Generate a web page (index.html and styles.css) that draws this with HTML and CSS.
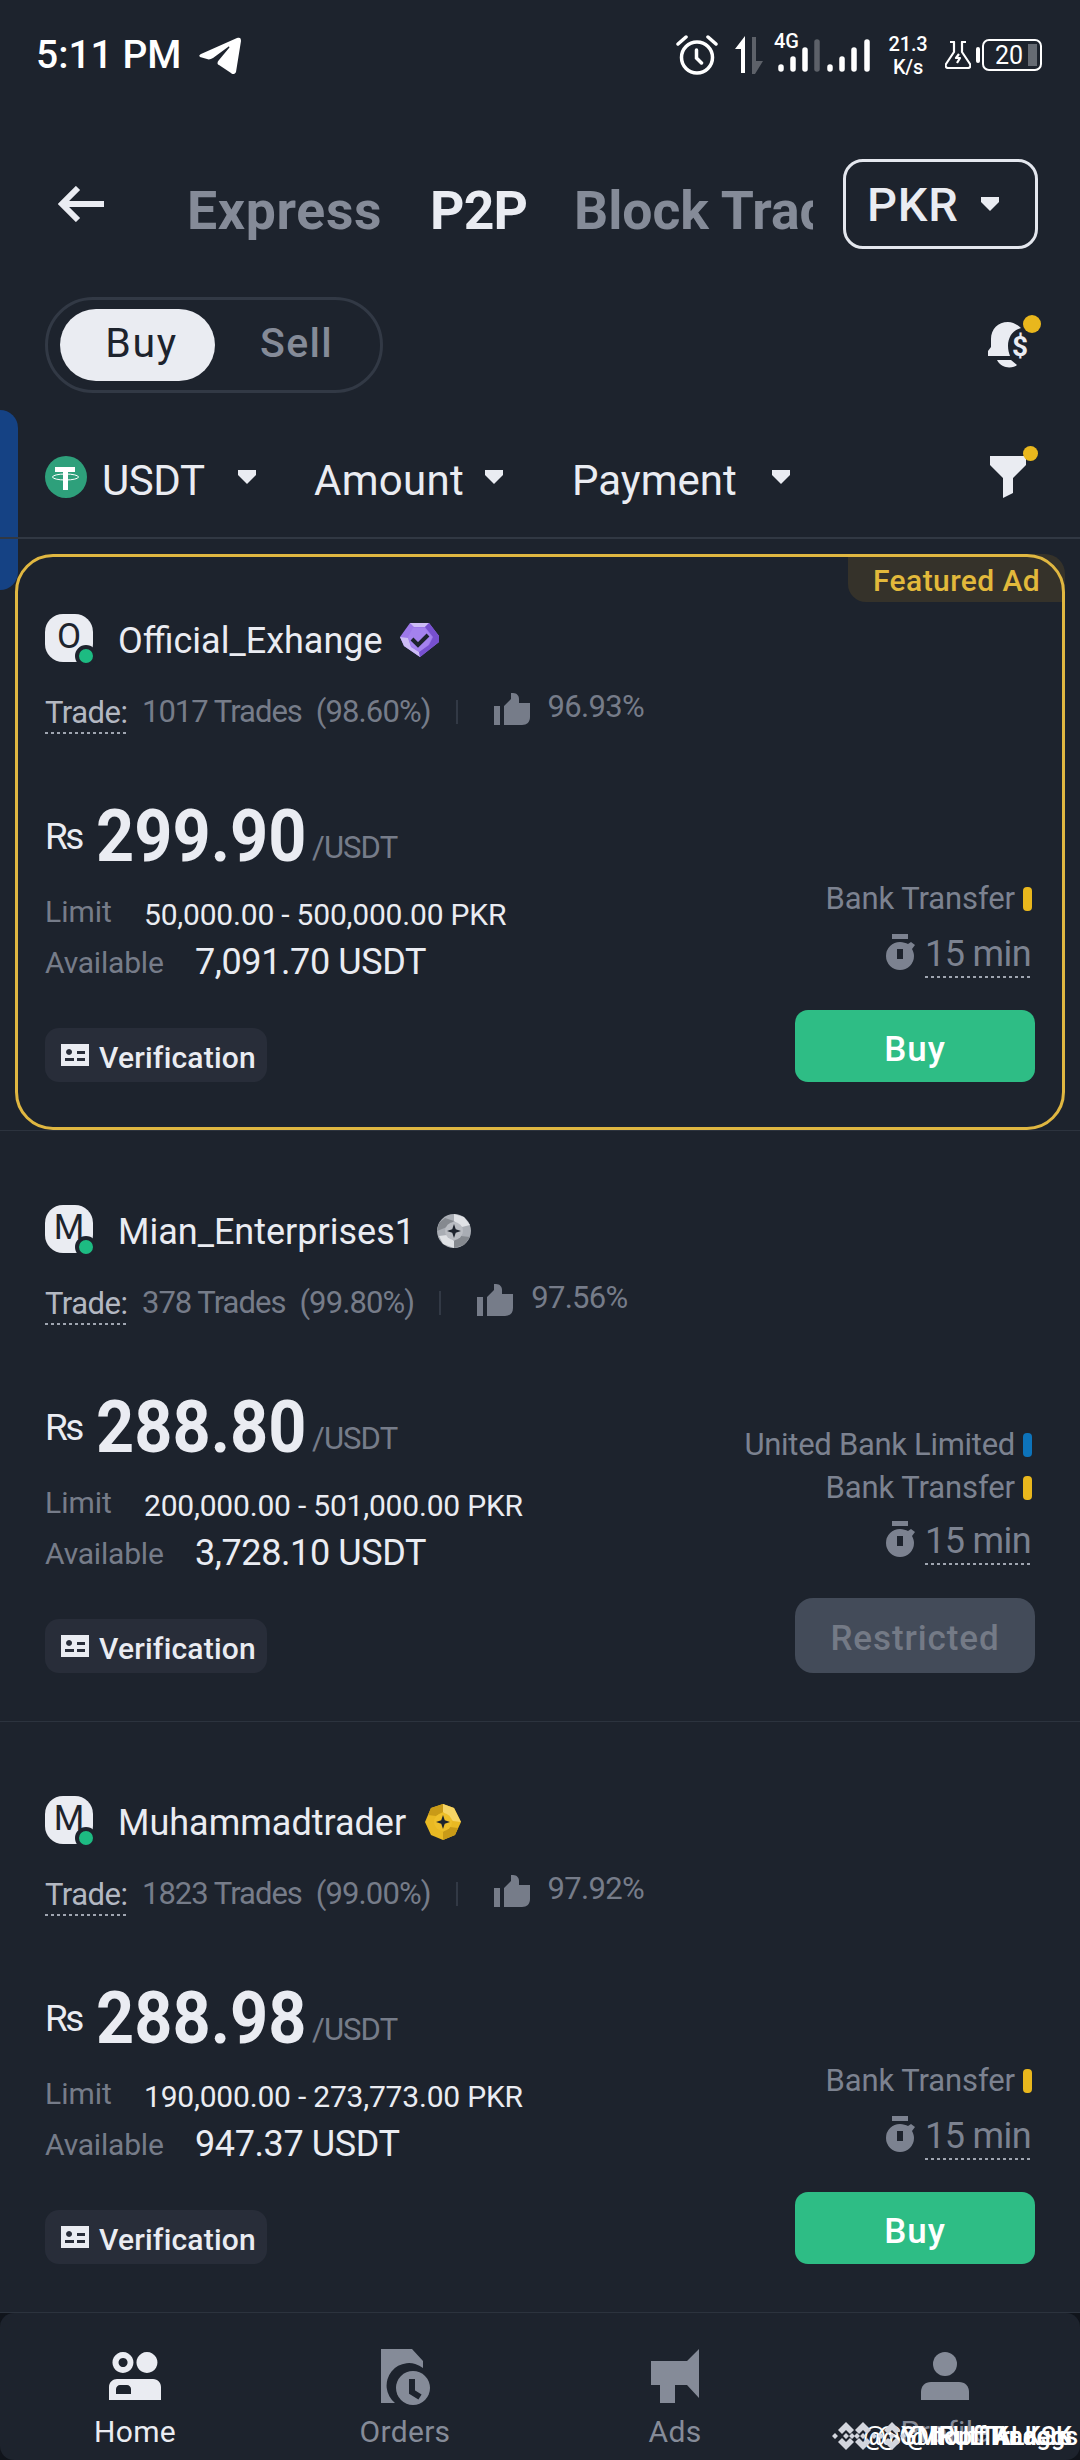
FILE: index.html
```html
<!DOCTYPE html>
<html lang="en">
<head>
    <meta charset="UTF-8">
    <meta name="viewport" content="width=device-width, initial-scale=1.0">
    <title>P2P</title>
    <link rel="stylesheet" href="styles.css">
</head>
<body>
    <!-- Shared icons -->
    <svg class="sprite">
        <symbol id="caret" viewBox="0 0 18 14"><path d="M0 0h18v5l-9 9-9-9z"/></symbol>
        <symbol id="thumb" viewBox="0 0 36 32"><path d="M0 13h6v19H0zM10 32V13l7-7V0h2c4 0 6 3 6 6v4h11v14c0 5-3 8-8 8z"/></symbol>
        <symbol id="timer" viewBox="0 0 29 36"><path fill-rule="evenodd" d="M6 0h16v5H6zM14 8c3 0 6 1 8 2l3-2 4 3-3 4c1 2 2 4 2 7a14 14 0 1 1-14-14zM11 15v10h6V15z"/></symbol>
        <symbol id="idcard" viewBox="0 0 28 22"><path fill-rule="evenodd" d="M0 0h28v22H0zM8 5a3 3 0 1 0 .1 0zM4 14v3h9v-3zM16 7v3h8V7zM16 14v3h8v-3z"/></symbol>
        <symbol id="star" viewBox="0 0 12 12"><path d="M6 0l1.500 4.500L12 6 7.500 7.500 6 12 4.500 7.500 0 6l4.500-1.500z"/></symbol>
        <symbol id="mark" viewBox="0 0 28 28"><path d="M14 0l8 8-4 4-4-4-4 4-4-4zM14 28l8-8-4-4-4 4-4-4-4 4zM3 11l3 3-3 3-3-3zM25 11l3 3-3 3-3-3zM14 11l3 3-3 3-3-3z"/></symbol>
    </svg>

    <div class="phone">
        <header class="header">
            <div class="status">
                <span class="clock">5:11 PM</span>
                <svg class="telegram" width="42" height="37" viewBox="0 0 42 37"><path fill="#fff" d="M2 17L38 1c3-1 4 0 4 3l-5 31c-1 2-3 3-5 1L20 28c-2-1-2-3 0-5l10-12c1-1 0-2-1-1L14 21c-2 1-4 2-6 1l-7-2c-1-1-1-2 1-3z"/></svg>
                <div class="status-right">
                    <svg class="alarm" width="42" height="40" viewBox="0 0 42 40" fill="none" stroke="#fff" stroke-width="3.500" stroke-linecap="round"><circle cx="21" cy="22.500" r="15.500"/><path d="M2 9l8-7M40 9l-8-7M20.500 15v8l5 5"/></svg>
                    <svg class="updown" width="28" height="38" viewBox="0 0 28 38"><path fill="#fff" d="M10 0v37H6V13H0z"/><path fill="#5d6169" d="M17 1h4v24h7L20 38h-3z"/></svg>
                    <div class="signal">
                        <span class="net">4G</span>
                        <svg width="96" height="33" viewBox="0 0 96 33" fill="none" stroke="#fff" stroke-width="5.500" stroke-linecap="round"><path d="M4 28v2M16 20v10M28 11v19M53 28v2M65 20v10M77 11v19M90 3v27"/><path stroke="#5d6169" d="M40 3v27"/></svg>
                    </div>
                    <div class="speed"><span>21.3</span><span>K/s</span></div>
                    <svg class="flask" width="26" height="28" viewBox="0 0 26 28" fill="none" stroke="#fff" stroke-width="2.200" stroke-linejoin="round"><path d="M5 1h4v10L1 23c-1 2 0 4 2 4h20c2 0 3-2 2-4l-8-12V1h4"/><path d="M14 13l-3 4h4l-3 5"/></svg>
                    <div class="battery"><span>20</span><i></i></div>
                </div>
            </div>

            <div class="topbar">
                <svg class="back" width="46" height="36" viewBox="0 0 46 36" fill="none" stroke="#eaecf2" stroke-width="6"><path d="M46 18H5M20 2L4 18l16 16"/></svg>
                <nav class="titles">
                    <span class="title t1">Express</span>
                    <span class="title t2 active">P2P</span>
                    <span class="title t3">Block Trade</span>
                </nav>
                <button class="currency"><span class="pkr">PKR</span><svg class="caret"><use href="#caret"/></svg></button>
            </div>

            <div class="side-row">
                <div class="toggle">
                    <span class="pill buy-pill">Buy</span>
                    <span class="pill">Sell</span>
                </div>
                <div class="bell">
                    <svg width="42" height="46" viewBox="0 0 42 46"><path fill="#eaecf2" d="M0 34v-5l3-4V17C3 7 10 0 20 0c5 0 10 3 13 6-8 2-13 9-13 18 0 4 1 7 2 10zM9 38h14l6 5c-3 3-15 5-20-5z"/></svg>
                    <span class="dollar">$</span>
                    <span class="alert"></span>
                </div>
            </div>

            <div class="filters">
                <svg class="usdt" width="42" height="42" viewBox="0 0 42 42"><circle cx="21" cy="21" r="21" fill="#2ea07b"/><path fill="#fff" d="M10 11h20v5h-7v18h-5V16h-8z"/><ellipse cx="20.500" cy="21" rx="13" ry="3" fill="none" stroke="#fff" stroke-width="1"/></svg>
                <span class="filter f1">USDT</span><svg class="caret"><use href="#caret"/></svg>
                <span class="filter f2">Amount</span><svg class="caret"><use href="#caret"/></svg>
                <span class="filter f3">Payment</span><svg class="caret"><use href="#caret"/></svg>
                <div class="funnel">
                    <svg width="36" height="42" viewBox="0 0 36 42"><path fill="#eaecf2" d="M0 0h36v9L23 22v15l-10 5V22L0 9z"/></svg>
                    <span class="alert small"></span>
                </div>
            </div>
        </header>

        <main class="offers">
            <section class="offer featured">
                <span class="tag">Featured Ad</span>
                <div class="trader">
                    <span class="avatar">O<i></i></span>
                    <span class="name">Official_Exhange</span>
                    <svg class="badge" width="39" height="34" viewBox="0 0 39 34"><path fill="#9d78ea" d="M10 0h19l10 13v6L20 34 4 23 0 14z"/><path fill="#cdbcf6" d="M10 0h19l-4 4H14zM0 14l8 1 3 9 8 5 1 5L4 23z"/><path fill="#7750cf" d="M29 0l10 13v6L20 34l-1-5 10-7 4-8-8-10z"/><path fill="#a482ee" d="M13 5h12l7 9-4 8-9 7-8-6-3-9z"/><path fill="none" stroke="#1d232d" stroke-width="4" d="M12 16l6 6 10-10"/></svg>
                </div>
                <div class="stats">
                    <span class="label">Trade:</span>
                    <span class="trades">1017 Trades</span>
                    <span class="rate">(98.60%)</span>
                    <i class="sep"></i>
                    <svg class="thumb"><use href="#thumb"/></svg>
                    <span class="like">96.93%</span>
                </div>
                <div class="body">
                    <div class="info">
                        <div class="price"><span class="rs">Rs</span><span class="amount">299.90</span><span class="unit">/USDT</span></div>
                        <div class="limit"><span class="key">Limit</span><span class="range">50,000.00 - 500,000.00 PKR</span></div>
                        <div class="avail"><span class="key">Available</span><span class="stock">7,091.70 USDT</span></div>
                        <div class="chip"><svg class="idcard"><use href="#idcard"/></svg><span>Verification</span></div>
                    </div>
                    <div class="side">
                        <div class="method"><span>Bank Transfer</span><i></i></div>
                        <div class="time"><svg class="timer"><use href="#timer"/></svg><span>15 min</span></div>
                        <button class="buy">Buy</button>
                    </div>
                </div>
            </section>

            <section class="offer restricted">
                <div class="trader">
                    <span class="avatar">M<i></i></span>
                    <span class="name">Mian_Enterprises1</span>
                    <svg class="badge silver" width="34" height="34" viewBox="0 0 34 34"><circle cx="17" cy="17" r="17" fill="#a9adb4"/><path fill="#dfe1e5" d="M17 0l10 3 6 8-8 2-8-6zM17 34L6 30 2 22l8-1 7 6z"/><path fill="#85898f" d="M17 34l10-3 6-8-9-1-7 5zM0 17l2-8 6-5 9 3-7 6z"/><circle cx="17" cy="17" r="9" fill="#b9bcc2"/><use href="#star" x="10" y="10" width="14" height="14" fill="#1d232d"/></svg>
                </div>
                <div class="stats">
                    <span class="label">Trade:</span>
                    <span class="trades">378 Trades</span>
                    <span class="rate">(99.80%)</span>
                    <i class="sep"></i>
                    <svg class="thumb"><use href="#thumb"/></svg>
                    <span class="like">97.56%</span>
                </div>
                <div class="body">
                    <div class="info">
                        <div class="price"><span class="rs">Rs</span><span class="amount">288.80</span><span class="unit">/USDT</span></div>
                        <div class="limit"><span class="key">Limit</span><span class="range">200,000.00 - 501,000.00 PKR</span></div>
                        <div class="avail"><span class="key">Available</span><span class="stock">3,728.10 USDT</span></div>
                        <div class="chip"><svg class="idcard"><use href="#idcard"/></svg><span>Verification</span></div>
                    </div>
                    <div class="side">
                        <div class="method blue"><span>United Bank Limited</span><i></i></div>
                        <div class="method"><span>Bank Transfer</span><i></i></div>
                        <div class="time"><svg class="timer"><use href="#timer"/></svg><span>15 min</span></div>
                        <button class="buy off">Restricted</button>
                    </div>
                </div>
            </section>

            <section class="offer">
                <div class="trader">
                    <span class="avatar">M<i></i></span>
                    <span class="name">Muhammadtrader</span>
                    <svg class="badge gold" width="36" height="36" viewBox="0 0 36 36"><path fill="#e9b923" d="M18 0l11 4 7 14-6 13-12 5-12-5L0 18 6 4z"/><path fill="#f6d465" d="M18 0l11 4 7 14-8-1-10-9z"/><path fill="#c99a17" d="M18 36l12-5 3-7-8-1-7 5zM18 0L6 4l-3 7 8 1 7-4z"/><circle cx="18" cy="18" r="9" fill="#eebf2a"/><use href="#star" x="11" y="11" width="14" height="14" fill="#1d232d"/></svg>
                </div>
                <div class="stats">
                    <span class="label">Trade:</span>
                    <span class="trades">1823 Trades</span>
                    <span class="rate">(99.00%)</span>
                    <i class="sep"></i>
                    <svg class="thumb"><use href="#thumb"/></svg>
                    <span class="like">97.92%</span>
                </div>
                <div class="body">
                    <div class="info">
                        <div class="price"><span class="rs">Rs</span><span class="amount">288.98</span><span class="unit">/USDT</span></div>
                        <div class="limit"><span class="key">Limit</span><span class="range">190,000.00 - 273,773.00 PKR</span></div>
                        <div class="avail"><span class="key">Available</span><span class="stock">947.37 USDT</span></div>
                        <div class="chip"><svg class="idcard"><use href="#idcard"/></svg><span>Verification</span></div>
                    </div>
                    <div class="side">
                        <div class="method"><span>Bank Transfer</span><i></i></div>
                        <div class="time"><svg class="timer"><use href="#timer"/></svg><span>15 min</span></div>
                        <button class="buy">Buy</button>
                    </div>
                </div>
            </section>
        </main>

        <div class="tabwrap">
            <nav class="tabs">
                <a class="tab on">
                    <svg width="52" height="58" viewBox="0 0 52 58"><path fill="currentColor" fill-rule="evenodd" d="M14 4a10.500 10.500 0 1 1-.1 0zM14 10a4.500 4.500 0 1 0 .1 0zM38 4a10.500 10.500 0 1 1-.1 0zM0 52V39c0-5 4-8 8-8h36c5 0 8 4 8 8v13zM7 46h15v-5c0-2-2-4-4-4h-7c-2 0-4 2-4 4z"/></svg>
                    <span>Home</span>
                </a>
                <a class="tab">
                    <svg width="50" height="58" viewBox="0 0 50 58"><path fill="currentColor" d="M1 1h31l11 12v7A21 21 0 0 0 15 55H1z"/><circle cx="33" cy="40" r="17" fill="currentColor"/><path fill="none" stroke="#1d232d" stroke-width="6" d="M32 31v13l8 5"/></svg>
                    <span>Orders</span>
                </a>
                <a class="tab">
                    <svg width="48" height="58" viewBox="0 0 48 58"><path fill="currentColor" d="M0 13h36L48 1v49L36 37H24v18H9V37H0z"/></svg>
                    <span>Ads</span>
                </a>
                <a class="tab">
                    <svg width="48" height="58" viewBox="0 0 48 58"><circle cx="24" cy="16" r="12" fill="currentColor"/><path fill="currentColor" d="M0 52V44c0-6 4-10 10-10h28c6 0 10 4 10 10v8z"/></svg>
                    <span>Profile</span>
                </a>
            </nav>
        </div>
        <div class="edge-handle"></div>

        <!-- Stacked share marks -->
        <div class="mark m1"><svg><use href="#mark"/></svg><span>@SYMFULTALKSK</span></div>
        <div class="mark m2"><svg><use href="#mark"/></svg><span>@GMRutf Knaggs</span></div>
        <div class="mark m3"><svg><use href="#mark"/></svg><span>@Itopf Traders</span></div>
    </div>
</body>
</html>
```

FILE: styles.css
```css
*, *::before {
    box-sizing: border-box;
}
html, body {
    margin: 0;
    padding: 0;
}
body {
    background: #1d232d;
    color: #eaecf2;
    font-family: Roboto, "Liberation Sans", sans-serif;
}
.sprite {
    display: none;
}
.phone {
    position: relative;
    width: 1080px;
    height: 2460px;
    overflow: hidden;
}
button {
    border: 0;
    padding: 0;
    color: inherit;
    font-family: inherit;
}
svg {
    flex: none;
}
span {
    white-space: nowrap;
}
.caret {
    width: 18px;
    height: 14px;
    fill: #eaecf2;
}

/* Header */
.header {
    height: 539px;
    border-bottom: 2px solid #313843;
}
.status {
    display: flex;
    align-items: center;
    height: 110px;
    padding: 0 38px 0 36px;
    color: #fff;
}
.clock {
    width: 163px;
    font-size: 39px;
    font-weight: 500;
}
.status-right {
    display: flex;
    align-items: center;
    margin-left: auto;
}
.updown {
    margin-left: 17px;
}
.signal {
    position: relative;
    height: 33px;
    margin-left: 14px;
}
.net {
    position: absolute;
    top: -10px;
    left: -3px;
    font-size: 20px;
    font-weight: 500;
    line-height: 24px;
}
.speed {
    display: flex;
    flex-direction: column;
    align-items: center;
    width: 40px;
    margin-left: 15px;
    padding-top: 1px;
    font-size: 20px;
    font-weight: 500;
    line-height: 23px;
    letter-spacing: -0.2px;
}
.flask {
    margin-left: 17px;
}
.battery {
    position: relative;
    display: flex;
    align-items: center;
    width: 60px;
    height: 32px;
    margin-left: 11px;
    padding-left: 11px;
    border: 2.5px solid #fff;
    border-radius: 7px;
    font-size: 25px;
}
.battery::before {
    content: "";
    position: absolute;
    left: -8px;
    width: 4px;
    height: 16px;
    border-radius: 2px;
    background: #fff;
}
.battery i {
    width: 9px;
    height: 22px;
    margin-left: 5px;
    background: #666b73;
}
.topbar {
    display: flex;
    align-items: center;
    height: 90px;
    margin-top: 49px;
    padding: 0 42px 0 58px;
}
.titles {
    display: flex;
    flex: none;
    width: 709px;
    padding: 13px 0 0 83px;
    overflow: hidden;
    color: #858b98;
    font-size: 53.5px;
    font-weight: 700;
    line-height: 64px;
}
.title {
    flex: none;
}
.title.active {
    color: #eaecf2;
    letter-spacing: -0.8px;
}
.t1 {
    width: 243px;
    letter-spacing: 0.7px;
}
.t2 {
    width: 144px;
}
.currency {
    display: flex;
    align-items: center;
    width: 195px;
    height: 90px;
    margin-left: auto;
    padding-left: 21px;
    border: 3px solid #e4e7ee;
    border-radius: 20px;
    background: none;
    font-size: 47px;
    font-weight: 500;
    text-align: left;
}
.pkr {
    width: 114px;
    letter-spacing: 0.8px;
}
.side-row {
    display: flex;
    justify-content: space-between;
    height: 96px;
    margin-top: 48px;
    padding: 0 50px 0 45px;
}
.toggle {
    display: flex;
    align-items: center;
    width: 338px;
    padding-left: 12px;
    border: 3px solid #323945;
    border-radius: 48px;
}
.pill {
    display: flex;
    align-items: center;
    justify-content: center;
    width: 155px;
    height: 72px;
    padding: 0 0 4px 8px;
    border-radius: 36px;
    color: #858b98;
    font-size: 41px;
    font-weight: 500;
    letter-spacing: 1.3px;
}
.buy-pill {
    background: #eaecf2;
    color: #1d232d;
    font-weight: 400;
    letter-spacing: 1.6px;
}
.bell {
    position: relative;
    width: 42px;
    margin-top: 25px;
}
.dollar {
    position: absolute;
    top: 10px;
    left: 24px;
    font-size: 28px;
    font-weight: 700;
    line-height: 30px;
}
.alert {
    position: absolute;
    top: -7px;
    right: -11px;
    width: 18px;
    height: 18px;
    border-radius: 50%;
    background: #e9b71d;
}
.alert.small {
    top: -10px;
    right: -12px;
    width: 15px;
    height: 15px;
}
.filters {
    display: flex;
    align-items: center;
    height: 66px;
    margin-top: 51px;
    padding: 0 54px 0 45px;
    font-size: 42px;
}
.filter {
    padding-top: 7px;
}
.f1 {
    width: 136px;
    margin-left: 15px;
    letter-spacing: -0.4px;
}
.f2 {
    width: 171px;
    margin-left: 58px;
    letter-spacing: 0.3px;
}
.f3 {
    width: 200px;
    margin-left: 69px;
}
.funnel {
    position: relative;
    height: 42px;
    margin-left: auto;
}

/* Offer list */
.offers {
    padding-top: 1px;
}
.offer {
    position: relative;
    height: 591px;
    padding: 74px 45px 0;
    border-bottom: 1px solid #2c333e;
}
.featured::before {
    content: "";
    position: absolute;
    top: 14px;
    left: 15px;
    z-index: 1;
    width: 1050px;
    height: 576px;
    border: 3px solid #e0b741;
    border-radius: 38px;
}
.tag {
    position: absolute;
    top: 14px;
    right: 15px;
    width: 217px;
    height: 48px;
    padding-left: 25px;
    border-radius: 0 20px 0 18px;
    background: #35322a;
    color: #e2b93b;
    font-size: 30px;
    font-weight: 500;
    line-height: 53px;
    letter-spacing: 0.4px;
}
.trader {
    display: flex;
    align-items: center;
    height: 48px;
}
.avatar {
    position: relative;
    width: 48px;
    height: 48px;
    border-radius: 18px;
    background: #eaecf2;
    color: #1d232d;
    font-size: 35px;
    line-height: 46px;
    text-align: center;
}
.avatar i {
    position: absolute;
    right: -4px;
    bottom: -5px;
    width: 22px;
    height: 22px;
    border: 4px solid #1d232d;
    border-radius: 50%;
    background: #1dbb82;
}
.name {
    padding-top: 5px;
    margin-left: 25px;
    font-size: 36px;
}
.badge {
    margin: 3px 0 0 17px;
}
.silver {
    margin-left: 22px;
}
.gold {
    margin-left: 19px;
}
.stats {
    display: flex;
    align-items: center;
    height: 44px;
    margin-top: 28px;
    color: #767c89;
    font-size: 31px;
    line-height: 44px;
}
.label {
    width: 82px;
    height: 43px;
    background: repeating-linear-gradient(90deg, #9fa5b0 0 3px, transparent 3px 6px) 0 100% / 100% 2px no-repeat;
    color: #b3b8c2;
    letter-spacing: -0.5px;
}
.trades {
    margin-left: 15px;
    letter-spacing: -1px;
}
.rate {
    margin-left: 14px;
    letter-spacing: -0.9px;
}
.sep {
    width: 2px;
    height: 24px;
    margin-left: 25px;
    background: #323945;
}
.thumb {
    width: 36px;
    height: 32px;
    margin: -6px 0 0 36px;
    fill: #767c89;
}
.like {
    margin: -10px 0 0 18px;
    letter-spacing: -0.7px;
}
.body {
    display: flex;
    justify-content: space-between;
    height: 348px;
}
.price {
    display: flex;
    align-items: baseline;
    height: 76px;
    margin-top: 65px;
    line-height: 76px;
}
.rs {
    position: relative;
    top: -12px;
    width: 51px;
    font-size: 37px;
    letter-spacing: -2.5px;
}
.amount {
    width: 216px;
    font-size: 72px;
    font-weight: 700;
    transform: scaleX(0.925);
    transform-origin: 0 0;
}
.unit {
    position: relative;
    top: -3px;
    color: #767c89;
    font-size: 31px;
    letter-spacing: -0.9px;
}
.key {
    color: #767c89;
    font-size: 30px;
}
.limit {
    display: flex;
    align-items: center;
    height: 30px;
    margin-top: 21px;
}
.limit .key {
    width: 99px;
}
.range {
    margin-top: 6px;
    font-size: 30px;
    letter-spacing: -0.2px;
}
.avail {
    display: flex;
    align-items: center;
    height: 40px;
    margin-top: 16px;
}
.avail .key {
    width: 150px;
    letter-spacing: -0.2px;
}
.stock {
    font-size: 36px;
    letter-spacing: -0.4px;
}
.chip {
    display: flex;
    align-items: center;
    width: 222px;
    height: 54px;
    margin-top: 46px;
    padding-left: 16px;
    border-radius: 14px;
    background: #282d39;
    font-size: 30px;
    font-weight: 500;
    letter-spacing: 0.2px;
}
.idcard {
    width: 28px;
    height: 22px;
    margin-right: 10px;
    fill: #eaecf2;
}
.chip span {
    margin-top: 5px;
}
.side {
    display: flex;
    flex-direction: column;
    align-items: flex-end;
    justify-content: flex-end;
    color: #7c8290;
}
.method {
    display: flex;
    align-items: center;
    height: 43px;
    padding-right: 3px;
    font-size: 31px;
    letter-spacing: -0.1px;
}
.blue {
    letter-spacing: -0.3px;
}
.method i {
    width: 9px;
    height: 24px;
    margin-left: 8px;
    border-radius: 4px;
    background: #e9b71d;
}
.method.blue i {
    background: #0d73ba;
}
.time {
    display: flex;
    align-items: flex-start;
    height: 44px;
    margin: 14px 4px 32px 0;
    font-size: 36px;
    line-height: 40px;
}
.restricted .time {
    margin-top: 12px;
    margin-bottom: 33px;
}
.timer {
    width: 29px;
    height: 36px;
    margin-right: 10px;
    fill: #7c8290;
}
.time span {
    height: 44px;
    background: repeating-linear-gradient(90deg, #9fa5b0 0 3px, transparent 3px 6px) 0 100% / 100% 2px no-repeat;
    letter-spacing: -0.6px;
}
.buy {
    width: 240px;
    height: 72px;
    padding-top: 6px;
    border-radius: 13px;
    background: #2ebd85;
    color: #fff;
    font-size: 35px;
    font-weight: 500;
    letter-spacing: 0.9px;
}
.buy.off {
    height: 75px;
    border-radius: 18px;
    background: #434b59;
    color: #747a86;
}

/* Bottom tabs */
.tabwrap {
    height: 147px;
    background: #10141b;
}
.tabs {
    display: flex;
    height: 147px;
    border-radius: 14px;
    background: #1d232d;
}
.tab {
    display: flex;
    flex: 1;
    flex-direction: column;
    align-items: center;
    padding-top: 35px;
    color: #858b98;
    font-size: 30px;
    letter-spacing: 0.3px;
}
.tab.on {
    color: #eaecf2;
}
.tab span {
    margin-top: 8px;
    line-height: 36px;
}
.edge-handle {
    position: absolute;
    top: 410px;
    left: 0;
    z-index: -1;
    width: 18px;
    height: 180px;
    border-radius: 0 18px 18px 0;
    background: #154284;
}
.mark {
    position: absolute;
    right: 8px;
    bottom: 8px;
    display: flex;
    align-items: center;
    justify-content: space-between;
    height: 32px;
    color: #fff;
    font-size: 25px;
    font-weight: 500;
}
.mark svg {
    width: 28px;
    height: 28px;
    fill: #d3d6de;
}
.m1 {
    width: 240px;
    letter-spacing: 0.2px;
}
.m2 {
    width: 223px;
    letter-spacing: 0.2px;
}
.m3 {
    width: 194px;
}
```
